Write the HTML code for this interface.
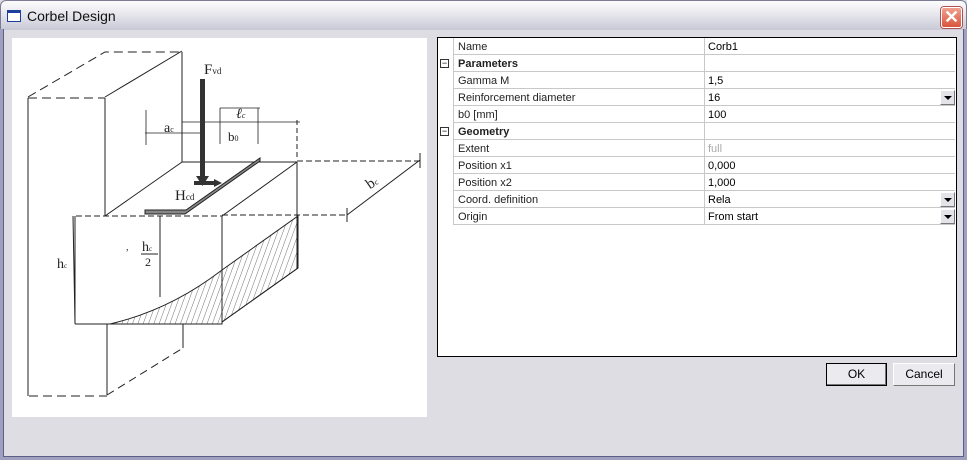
<!DOCTYPE html>
<html><head><style>
*{margin:0;padding:0;box-sizing:border-box}
body{width:967px;height:460px;overflow:hidden;background:#dedde3;font-family:"Liberation Sans",Tahoma,sans-serif;font-size:11px;position:relative}
.title{position:absolute;left:0;top:0;width:967px;height:30px;background:linear-gradient(#fdfdfe,#e9e9ef 40%,#c9c9d6);border:1px solid #7b7b95;border-bottom:none;border-radius:6px 6px 0 0}
.title span{position:absolute;left:26px;top:7px;font-size:14px;color:#111}
.ico{position:absolute;left:6px;top:9px;width:14px;height:12px;border:1px solid #1f3f9f;border-top:3px solid #1f3f9f;background:#fff}
.close{position:absolute;left:940px;top:6px;width:21px;height:21px;border-radius:3px;background:linear-gradient(#f0a090,#d9553d);border:1px solid #fff;box-shadow:0 0 0 1px #b05050;color:#fff;font-size:18px;line-height:19px;text-align:center;font-weight:bold}
.frame{position:absolute;left:0;top:29px;width:967px;height:431px;border:3px solid #9ea0bd;border-top:none;box-shadow:inset 1px 0 #5c5f8a,inset -1px 0 #5c5f8a,inset 0 -1px #5c5f8a}
.img{position:absolute;left:12px;top:38px;width:415px;height:379px;background:#fff}
.grid{position:absolute;left:437px;top:37px;width:520px;height:320px;background:#fff;border:1px solid #000}
.row{position:absolute;left:15px;width:502px;height:17px;border-bottom:1px solid #c8c8c8;border-left:1px solid #c8c8c8}
.row .n{position:absolute;left:4px;top:3px;color:#222}
.row .v{position:absolute;left:250px;top:0;height:17px;border-left:1px solid #c8c8c8;padding-left:3px;padding-top:3px;width:252px}
.b{font-weight:bold;color:#000}
.pm{position:absolute;left:2px;width:9px;height:9px;border:1px solid #333;font-size:9px;line-height:6px;text-align:center}
.dd{position:absolute;right:1px;top:1px;width:15px;height:15px;background:#e4e3e8;border:1px solid;border-color:#fff #777 #777 #fff}
.dd:after{content:"";position:absolute;left:3px;top:5px;border-left:4px solid transparent;border-right:4px solid transparent;border-top:4px solid #000}
.btn{position:absolute;top:363px;height:23px;background:#ebebef;border:1px solid;border-color:#fff #777 #777 #fff;text-align:center;line-height:21px;font-size:12px}
</style></head><body>
<div class="title"><div class="ico"></div><span>Corbel Design</span><div class="close">✕</div></div>
<div class="frame"></div>
<div class="img">
<svg width="415" height="379" viewBox="12 38 415 379" style="display:block">
<defs><pattern id="h" width="5" height="5" patternUnits="userSpaceOnUse" patternTransform="rotate(20)"><line x1="0" y1="0" x2="0" y2="5" stroke="#333" stroke-width="0.7"/></pattern></defs>
<g fill="none" stroke="#222" stroke-width="1">
<path d="M28,97 L105,52 L182,52" stroke-dasharray="9,5"/>
<path d="M28,98 L105,98" stroke-dasharray="9,5"/>
<path d="M105,97 L182,51 M105,98 V216 M182,52 V162"/>
<path d="M28,98 V396"/>
<path d="M29,396 L107,396" stroke-dasharray="9,5"/>
<path d="M105,216 L182,162 M182,162 H297" />
<path d="M76,216 H222" stroke-dasharray="6,3"/>
<path d="M222,216 L297,162 M297,162 V268 M75,216 V324 M222,216 V322 M75,324 H222 M222,322 L298,268 M160,216 V297"/>
<path d="M297,120 V160" stroke-dasharray="5,3"/>
<path d="M182,122 H300 M145,133 H200 M146,110 V145" stroke-width="0.8"/>
<path d="M220,144 V108 M220,108 H260 M258,108 V144" stroke-width="0.8"/>
<path d="M297,161 H420 M222,215 H347" stroke-dasharray="6,3"/>
<path d="M347,215 L420,160 M347,208 V222 M420,153 V168"/>
<path d="M107,324 V395 M183,324 V348"/>
<path d="M107,395 L183,348" stroke-dasharray="8,5"/>
<path d="M73,216 L75,324"/>
</g>
<path d="M110,324 Q170,310 222,270 L298,216 V268 L222,322 V324 H110 Z" fill="url(#h)" stroke="#222"/>
<path d="M145,210 H186 L260,158 V161 L185,214 H145 Z" fill="#888" stroke="#222"/>
<rect x="200" y="79" width="5" height="100" fill="#333"/>
<path d="M196,176 L202.5,186 L209,176 Z" fill="#333"/>
<rect x="194" y="181" width="22" height="4" fill="#333"/>
<path d="M214,179 L222,183 L214,187 Z" fill="#333"/>
<g font-family="Liberation Serif,serif" fill="#222">
<text x="204" y="74" font-size="15">F<tspan font-size="9">vd</tspan></text>
<text x="236" y="118" font-size="14" font-style="italic">ℓ<tspan font-size="8">c</tspan></text>
<text x="164" y="132" font-size="14">a<tspan font-size="8">c</tspan></text>
<text x="228" y="141" font-size="13">b<tspan font-size="8">0</tspan></text>
<text x="175" y="200" font-size="15">H<tspan font-size="9">cd</tspan></text>
<text x="366" y="187" font-size="15" transform="rotate(-35 372 182)">b<tspan font-size="8">c</tspan></text>
<text x="57" y="268" font-size="14">h<tspan font-size="7">c</tspan></text>
<text x="142" y="251" font-size="14">h<tspan font-size="7">c</tspan></text>
<line x1="141" y1="254" x2="158" y2="254" stroke="#222"/>
<text x="145" y="266" font-size="12">2</text>
<text x="126" y="250" font-size="10">,</text>
</g>
</svg>
</div>
<div class="grid">
<div class="row" style="top:0"><span class="n">Name</span><span class="v">Corb1</span></div>
<div class="pm" style="top:21px">−</div>
<div class="row" style="top:17px"><span class="n b">Parameters</span><span class="v"></span></div>
<div class="row" style="top:34px"><span class="n">Gamma M</span><span class="v">1,5</span></div>
<div class="row" style="top:51px"><span class="n">Reinforcement diameter</span><span class="v">16<span class="dd"></span></span></div>
<div class="row" style="top:68px"><span class="n">b0 [mm]</span><span class="v">100</span></div>
<div class="pm" style="top:89px">−</div>
<div class="row" style="top:85px"><span class="n b">Geometry</span><span class="v"></span></div>
<div class="row" style="top:102px"><span class="n">Extent</span><span class="v" style="color:#aaa">full</span></div>
<div class="row" style="top:119px"><span class="n">Position x1</span><span class="v">0,000</span></div>
<div class="row" style="top:136px"><span class="n">Position x2</span><span class="v">1,000</span></div>
<div class="row" style="top:153px"><span class="n">Coord. definition</span><span class="v">Rela<span class="dd"></span></span></div>
<div class="row" style="top:170px"><span class="n">Origin</span><span class="v">From start<span class="dd"></span></span></div>
</div>
<div class="btn" style="left:826px;width:61px;border:1px solid #000;box-shadow:inset -1px -1px #777">OK</div>
<div class="btn" style="left:893px;width:62px">Cancel</div>
</body></html>
